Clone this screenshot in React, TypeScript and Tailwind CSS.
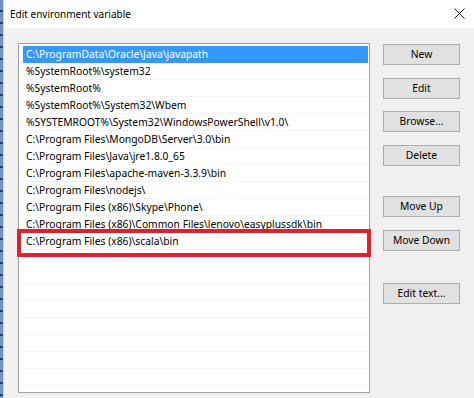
import React from 'react';

const paths = [
  'C:\\ProgramData\\Oracle\\Java\\javapath',
  '%SystemRoot%\\system32',
  '%SystemRoot%',
  '%SystemRoot%\\System32\\Wbem',
  '%SYSTEMROOT%\\System32\\WindowsPowerShell\\v1.0\\',
  'C:\\Program Files\\MongoDB\\Server\\3.0\\bin',
  'C:\\Program Files\\Java\\jre1.8.0_65',
  'C:\\Program Files\\apache-maven-3.3.9\\bin',
  'C:\\Program Files\\nodejs\\',
  'C:\\Program Files (x86)\\Skype\\Phone\\',
  'C:\\Program Files (x86)\\Common Files\\lenovo\\easyplussdk\\bin',
  'C:\\Program Files (x86)\\scala\\bin',
];

// empty rows keep drawing the faint separators down to the bottom of the list
const rows = [...paths, ...Array.from({ length: 9 }, () => '')];

function DialogButton({ label }: { label: string }) {
  return (
    <button className="h-[21px] w-[77px] border border-[#adadad] bg-[#e1e1e1] text-[10.3px] leading-none text-black">
      {label}
    </button>
  );
}

export default function App() {
  return (
    <div
      className="flex h-[398px] w-[474px] overflow-hidden bg-[#f0f0f0]"
      style={{ fontFamily: '"Segoe UI", "Noto Sans", sans-serif' }}
    >
      {/* window behind the dialog */}
      <div className="w-[3px] shrink-0 bg-[repeating-linear-gradient(180deg,#6a93c8_0px,#6a93c8_10px,#2a3b66_10px,#2a3b66_12px)]" />
      <div className="w-px shrink-0 bg-[#d6d6d6]" />

      <div className="flex flex-1 flex-col">
        {/* title bar */}
        <div className="flex h-[28px] shrink-0 items-center justify-between bg-white pl-[6px] pr-[9px]">
          <span className="text-[10px] text-black">Edit environment variable</span>
          <svg width="11" height="11" viewBox="0 0 11 11" className="mt-[-1px]">
            <path d="M0.5 0.5 L10.5 10.5 M10.5 0.5 L0.5 10.5" stroke="#222" strokeWidth="1" />
          </svg>
        </div>

        {/* body */}
        <div className="flex flex-1 gap-[13px] pl-[14px] pt-[15px]">
          <div className="relative h-[350px] w-[352px] shrink-0 overflow-hidden border border-[#a0a0a0] bg-white pt-[2px]">
            {rows.map((p, i) => (
              <div
                key={i}
                className={`ml-[4px] mr-[1px] h-[17px] border-b pl-[3px] text-[10.3px] leading-[16px] whitespace-nowrap ${
                  i === 0 ? 'border-[#3399ff] bg-[#3399ff] text-white' : 'border-[#f3f3f3] text-black'
                }`}
              >
                {p}
              </div>
            ))}
          </div>

          <div className="flex flex-col pt-[1px]">
            <div className="flex flex-col gap-[12.5px]">
              <DialogButton label="New" />
              <DialogButton label="Edit" />
              <DialogButton label="Browse..." />
              <DialogButton label="Delete" />
            </div>
            <div className="mt-[30.5px] flex flex-col gap-[12.5px]">
              <DialogButton label="Move Up" />
              <DialogButton label="Move Down" />
            </div>
            <div className="mt-[28.5px]">
              <DialogButton label="Edit text..." />
            </div>
          </div>
        </div>
      </div>

      {/* annotation around the scala entry */}
      <div className="pointer-events-none absolute left-[17px] top-[229px] h-[28px] w-[354px] border-[4px] border-[#e0202c]" />
    </div>
  );
}
